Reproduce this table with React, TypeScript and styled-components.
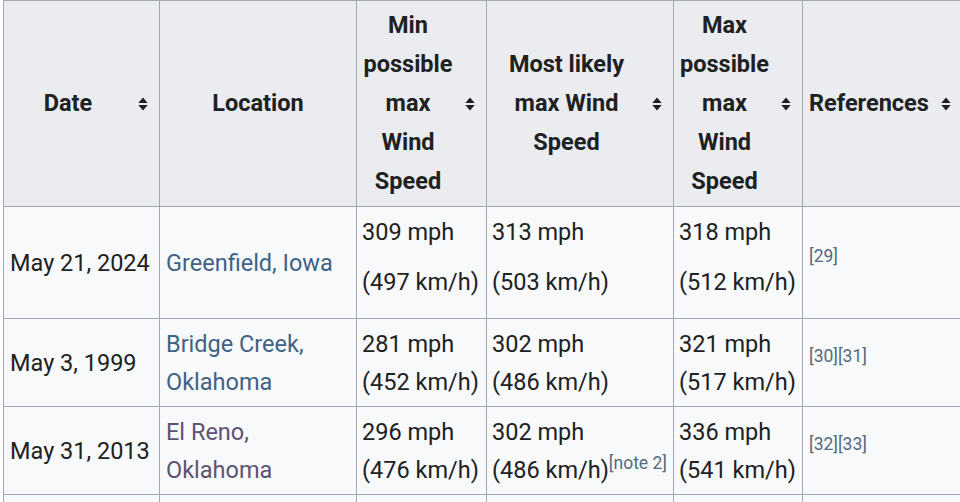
import styled, { createGlobalStyle } from "styled-components";

const GlobalStyle = createGlobalStyle`
  html, body {
    margin: 0;
    padding: 0;
    background: #ffffff;
    overflow: hidden;
    height: 502px;
  }
  body {
    font-family: Roboto, "Liberation Sans", Arial, sans-serif;
    color: #202122;
  }
`;

type Row = {
  date: string;
  location: string[];
  visited?: boolean;
  min: [string, string];
  likely: [string, string];
  likelyNote?: string;
  max: [string, string];
  refs: string[];
  height: number;
  spread?: boolean;
};

const rows: Row[] = [
  {
    date: "May 21, 2024",
    location: ["Greenfield, Iowa"],
    min: ["309 mph", "(497 km/h)"],
    likely: ["313 mph", "(503 km/h)"],
    max: ["318 mph", "(512 km/h)"],
    refs: ["29"],
    height: 112,
    spread: true,
  },
  {
    date: "May 3, 1999",
    location: ["Bridge Creek,", "Oklahoma"],
    min: ["281 mph", "(452 km/h)"],
    likely: ["302 mph", "(486 km/h)"],
    max: ["321 mph", "(517 km/h)"],
    refs: ["30", "31"],
    height: 88,
  },
  {
    date: "May 31, 2013",
    location: ["El Reno,", "Oklahoma"],
    visited: true,
    min: ["296 mph", "(476 km/h)"],
    likely: ["302 mph", "(486 km/h)"],
    likelyNote: "note 2",
    max: ["336 mph", "(541 km/h)"],
    refs: ["32", "33"],
    height: 88,
  },
];

const columns = [156, 197, 130, 187, 129, 159];

const Table = styled.table`
  margin-left: 3px;
  border-collapse: collapse;
  table-layout: fixed;
  width: ${columns.reduce((a, b) => a + b, 0)}px;
  font-size: 23.5px;
  background: #f8f9fa;
`;

const HeadCell = styled.th<{ $sortable: boolean }>`
  background: #eaecf0;
  border: 1px solid #a2a9b1;
  padding: 4px ${({ $sortable }) => ($sortable ? 11 : 6)}px 4px 6px;
  font-weight: 700;
  line-height: 39px;
  vertical-align: middle;
  height: 197px;
`;

const HeadInner = styled.div`
  display: flex;
  align-items: center;
  gap: 12px;
`;

const HeadText = styled.span`
  flex: 1;
  text-align: center;
`;

const SortIcon = styled.svg`
  flex: none;
  width: 10px;
  height: 14px;
  fill: #202122;
`;

const BodyRow = styled.tr<{ $height: number }>`
  height: ${({ $height }) => $height}px;
`;

const Cell = styled.td<{ $spread?: boolean }>`
  border: 1px solid #a2a9b1;
  padding: ${({ $spread }) => ($spread ? "4px 6px 16px 5px" : "4px 6px 4px 5px")};
  line-height: 38px;
  vertical-align: middle;
`;

const TextCell = styled(Cell)`
  padding-left: 6px;
`;

const Line = styled.span<{ $gap?: boolean }>`
  display: block;
  white-space: nowrap;
  margin-top: ${({ $gap }) => ($gap ? 12 : 0)}px;
`;

const PlaceLink = styled.a<{ $visited?: boolean }>`
  color: ${({ $visited }) => ($visited ? "#5d5273" : "#3f6285")};
  text-decoration: none;
`;

const Sup = styled.sup`
  font-size: 17.5px;
  line-height: 1;
  vertical-align: 9px;
  color: #56697d;
`;

const Sort = () => (
  <SortIcon viewBox="0 0 10 14">
    <path d="M0.3 6 L5 0.6 L9.7 6 Z M0.3 8 L5 13.4 L9.7 8 Z" />
  </SortIcon>
);

const Head = ({ lines, sortable = true }: { lines: string[]; sortable?: boolean }) => (
  <HeadCell $sortable={sortable}>
    <HeadInner>
      <HeadText>
        {lines.map((l, i) => (
          <span key={i}>
            {i > 0 && <br />}
            {l}
          </span>
        ))}
      </HeadText>
      {sortable && <Sort />}
    </HeadInner>
  </HeadCell>
);

const Speed = ({ value, note, spread }: { value: [string, string]; note?: string; spread?: boolean }) => (
  <Cell $spread={spread}>
    <Line>{value[0]}</Line>
    <Line $gap={spread}>
      {value[1]}
      {note && <Sup>[{note}]</Sup>}
    </Line>
  </Cell>
);

export default function App() {
  return (
    <>
      <GlobalStyle />
      <Table>
        <colgroup>
          {columns.map((w, i) => (
            <col key={i} style={{ width: w }} />
          ))}
        </colgroup>
        <thead>
          <tr>
            <Head lines={["Date"]} />
            <Head lines={["Location"]} sortable={false} />
            <Head lines={["Min", "possible", "max", "Wind", "Speed"]} />
            <Head lines={["Most likely", "max Wind", "Speed"]} />
            <Head lines={["Max", "possible", "max", "Wind", "Speed"]} />
            <Head lines={["References"]} />
          </tr>
        </thead>
        <tbody>
          {rows.map((r) => (
            <BodyRow key={r.date} $height={r.height}>
              <TextCell>{r.date}</TextCell>
              <TextCell>
                <PlaceLink href="#" $visited={r.visited}>
                  {r.location.map((l, i) => (
                    <span key={i}>
                      {i > 0 && <br />}
                      {l}
                    </span>
                  ))}
                </PlaceLink>
              </TextCell>
              <Speed value={r.min} spread={r.spread} />
              <Speed value={r.likely} note={r.likelyNote} spread={r.spread} />
              <Speed value={r.max} spread={r.spread} />
              <TextCell>
                {r.refs.map((n) => (
                  <Sup key={n}>[{n}]</Sup>
                ))}
              </TextCell>
            </BodyRow>
          ))}
          <BodyRow $height={88}>
            <TextCell />
            <TextCell />
            <Cell />
            <Cell />
            <Cell />
            <TextCell />
          </BodyRow>
        </tbody>
      </Table>
    </>
  );
}
